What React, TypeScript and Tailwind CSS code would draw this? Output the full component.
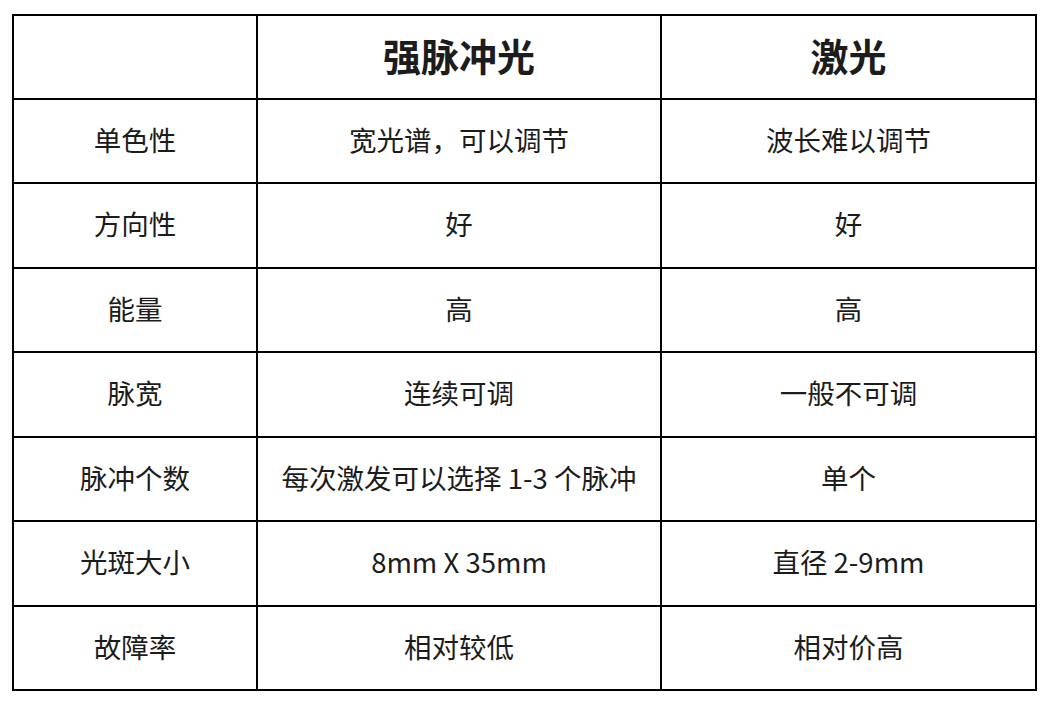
import React from 'react';

const rows: [string, string, string][] = [
    ['单色性', '宽光谱，可以调节', '波长难以调节'],
    ['方向性', '好', '好'],
    ['能量', '高', '高'],
    ['脉宽', '连续可调', '一般不可调'],
    ['脉冲个数', '每次激发可以选择 1-3 个脉冲', '单个'],
    ['光斑大小', '8mm X 35mm', '直径 2-9mm'],
    ['故障率', '相对较低', '相对价高'],
];

const font = { fontFamily: '"Noto Sans CJK SC", "Noto Sans", sans-serif' };

export default function App() {
    return (
        <div className="w-[1048px] h-[714px] bg-white pt-[14px] pl-[12px]" style={font}>
            <div className="grid w-[1025px] grid-cols-[242px_402px_373px] grid-rows-[82px_82px_83px_82px_83px_82px_83px_82px] gap-[2px] bg-black p-[2px] text-[#1c1c1c]">
                <div className="bg-white" />
                <div className="bg-white flex items-center justify-center pb-[6px] text-[38px] font-bold">强脉冲光</div>
                <div className="bg-white flex items-center justify-center pb-[6px] text-[38px] font-bold">激光</div>
                {rows.map((r, i) => (
                    <React.Fragment key={i}>
                        {r.map((c, j) => (
                            <div key={j} className="bg-white flex items-center justify-center pb-[3px] text-[27.5px] whitespace-nowrap">
                                {c}
                            </div>
                        ))}
                    </React.Fragment>
                ))}
            </div>
        </div>
    );
}
